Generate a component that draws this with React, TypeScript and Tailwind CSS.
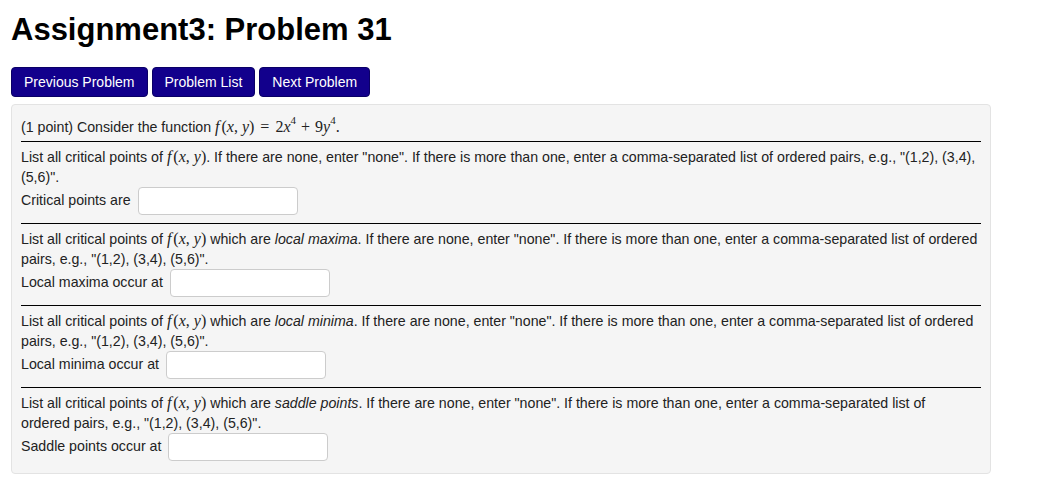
import React from "react";

const F = () => (
  <span className="font-['Liberation_Serif',serif] text-[16px]">
    <i className="mr-[2px]">f</i>(<i>x</i>, <i>y</i>)
  </span>
);

const Input = () => (
  <span className="inline-block w-[160px] h-[28px] bg-white border border-[#cccccc] rounded-[4px] align-middle" />
);

const Section = ({
  children,
  label,
  last,
}: {
  children: React.ReactNode;
  label: string;
  last?: boolean;
}) => (
  <div>
    <div className="h-px bg-black" />
    <div className="pt-[5px]">
      <p className="leading-[20px] pr-[3px]">{children}</p>
      <div className="flex items-center gap-[7px] h-[28px]">
        <span>{label}</span>
        <Input />
      </div>
    </div>
    <div className={last ? "h-[12px]" : "h-[8px]"} />
  </div>
);

export default function App() {
  const tail = (
    <>
      . If there are none, enter "none". If there is more than one, enter a comma-separated list of ordered pairs, e.g., "(1,2), (3,4), (5,6)".
    </>
  );
  return (
    <div className="font-['Liberation_Sans',Arial,sans-serif] text-[14.2px] text-[#222] bg-white min-h-[498px] px-[11px]">
      <h1 className="text-[31px] font-bold text-black leading-[34px] pt-[13px] m-0">
        Assignment3: Problem 31
      </h1>
      <div className="flex gap-[4px] mt-[20px]">
        {["Previous Problem", "Problem List", "Next Problem"].map((t) => (
          <span
            key={t}
            className="inline-flex items-center h-[30px] px-[12px] bg-[#12008c] border border-[#0a0066] rounded-[4px] text-white text-[14px]"
          >
            {t}
          </span>
        ))}
      </div>
      <div className="mt-[7px] w-[980px] bg-[#f5f5f5] border border-[#e3e3e3] rounded-[4px] px-[9px] pt-[11px]">
        <div className="h-[25px] leading-[22px]">
          (1 point) Consider the function{" "}
          <span className="font-['Liberation_Serif',serif] text-[16px]">
            <i className="mr-[2px]">f</i>(<i>x</i>, <i>y</i>) <span className="mx-[2px]">=</span> 2<i>x</i>
            <sup className="text-[11px] top-[-0.7em]">4</sup> <span className="mx-[1px]">+</span> 9<i>y</i>
            <sup className="text-[11px] top-[-0.7em]">4</sup>.
          </span>
        </div>
        <Section label="Critical points are">
          List all critical points of <F />
          {tail}
        </Section>
        <Section label="Local maxima occur at">
          List all critical points of <F /> which are <i>local maxima</i>
          {tail}
        </Section>
        <Section label="Local minima occur at">
          List all critical points of <F /> which are <i>local minima</i>
          {tail}
        </Section>
        <Section label="Saddle points occur at" last>
          List all critical points of <F /> which are <i>saddle points</i>
          {tail}
        </Section>
      </div>
    </div>
  );
}
